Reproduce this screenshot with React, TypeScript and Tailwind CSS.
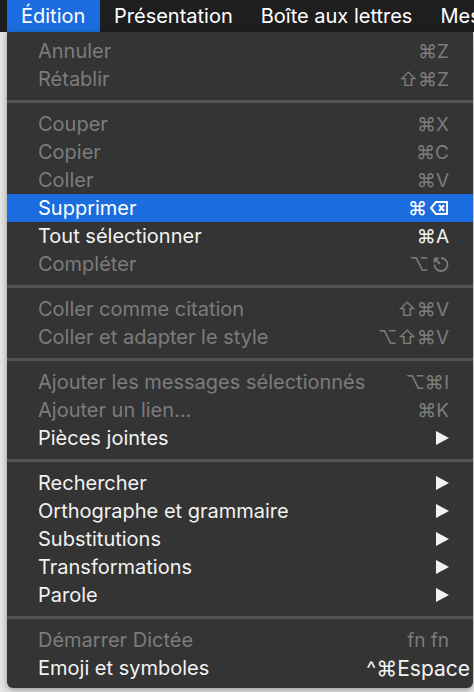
import React from 'react';

type Item = {
  label: string;
  keys?: string;
  glyph?: 'delete' | 'escape';
  submenu?: boolean;
  enabled?: boolean;
  active?: boolean;
  wide?: boolean;
};

const groups: Item[][] = [
  [
    { label: 'Annuler', keys: '⌘Z' },
    { label: 'Rétablir', keys: '⇧⌘Z' },
  ],
  [
    { label: 'Couper', keys: '⌘X' },
    { label: 'Copier', keys: '⌘C' },
    { label: 'Coller', keys: '⌘V' },
    { label: 'Supprimer', keys: '⌘', glyph: 'delete', enabled: true, active: true },
    { label: 'Tout sélectionner', keys: '⌘A', enabled: true },
    { label: 'Compléter', keys: '⌥', glyph: 'escape' },
  ],
  [
    { label: 'Coller comme citation', keys: '⇧⌘V' },
    { label: 'Coller et adapter le style', keys: '⌥⇧⌘V' },
  ],
  [
    { label: 'Ajouter les messages sélectionnés', keys: '⌥⌘I' },
    { label: 'Ajouter un lien…', keys: '⌘K' },
    { label: 'Pièces jointes', submenu: true, enabled: true },
  ],
  [
    { label: 'Rechercher', submenu: true, enabled: true },
    { label: 'Orthographe et grammaire', submenu: true, enabled: true },
    { label: 'Substitutions', submenu: true, enabled: true },
    { label: 'Transformations', submenu: true, enabled: true },
    { label: 'Parole', submenu: true, enabled: true },
  ],
  [
    { label: 'Démarrer Dictée', keys: 'fn fn' },
    { label: 'Emoji et symboles', keys: '^⌘Espace', enabled: true, wide: true },
  ],
];

const font = { fontFamily: 'Inter, "DejaVu Sans", sans-serif' };

function DeleteGlyph() {
  return (
    <svg width="19" height="16" viewBox="0 0 19 16" className="ml-[3px]">
      <path d="M6 2 H17 V14 H6 L1 8 Z" fill="none" stroke="currentColor" strokeWidth="2" strokeLinejoin="round" />
      <path d="M9 5 L14 11 M14 5 L9 11" stroke="currentColor" strokeWidth="2" />
    </svg>
  );
}

function EscapeGlyph() {
  return (
    <svg width="17" height="17" viewBox="0 0 17 17" className="ml-[3px]">
      <path d="M9 2 A6.5 6.5 0 1 1 2.5 8.5" fill="none" stroke="currentColor" strokeWidth="1.8" />
      <path d="M3 3 L8 8" stroke="currentColor" strokeWidth="1.8" />
      <path d="M2.5 2.5 H6.5 M2.5 2.5 V6.5" stroke="currentColor" strokeWidth="1.8" />
    </svg>
  );
}

function Row({ item }: { item: Item }) {
  const tone = item.active
    ? 'bg-[#1b6ddf] text-white'
    : item.enabled
      ? 'text-[#f2f2f2]'
      : 'text-[#7c7c7c]';
  return (
    <div
      className={`flex h-[28px] items-center justify-between pl-[31px] ${item.wide ? 'pr-[3px]' : 'pr-[24px]'} ${tone}`}
    >
      <span className="text-[20px] leading-none">{item.label}</span>
      {item.submenu ? (
        <svg width="13" height="14" viewBox="0 0 13 14">
          <path d="M0 0 L13 7 L0 14 Z" fill="currentColor" />
        </svg>
      ) : (
        <span className={`flex items-center leading-none ${item.wide ? 'text-[21px]' : 'text-[19px]'}`}>
          {item.keys}
          {item.glyph === 'delete' && <DeleteGlyph />}
          {item.glyph === 'escape' && <EscapeGlyph />}
        </span>
      )}
    </div>
  );
}

export default function App() {
  const bar = ['Présentation', 'Boîte aux lettres', 'Messages'];
  return (
    <div className="flex h-[692px] w-[474px] flex-col overflow-hidden bg-[#e9e9e9]" style={font}>
      <div className="flex h-[32px] shrink-0 items-center overflow-hidden bg-[#1e1e1e] text-[20px] text-white">
        <div className="ml-[7px] flex h-full w-[93px] shrink-0 items-center bg-[#1b6ddf] pl-[14px]">Édition</div>
        {bar.map((b) => (
          <div key={b} className="shrink-0 whitespace-nowrap pl-[14px] pr-[14px]">
            {b}
          </div>
        ))}
      </div>
      <div className="flex min-h-0 flex-1">
        <div className="w-[7px] shrink-0 bg-[#e4e4e4]" />
        <div className="h-[656px] w-[466px] shrink-0 rounded-b-[6px] bg-[#343434] pb-[6px] pt-[5px] shadow-[0_2px_6px_rgba(0,0,0,0.35)]">
          {groups.map((g, i) => (
            <div key={i}>
              {i > 0 && (
                <div className="flex h-[17px] items-center">
                  <div className="h-[3px] w-full bg-[#545454]" />
                </div>
              )}
              {g.map((item) => (
                <Row key={item.label} item={item} />
              ))}
            </div>
          ))}
        </div>
      </div>
    </div>
  );
}
